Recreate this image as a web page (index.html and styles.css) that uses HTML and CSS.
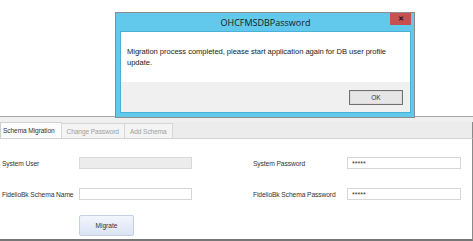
FILE: index.html
```html
<!DOCTYPE html>
<html lang="en">
<head>
  <meta charset="UTF-8">
  <title>OHCFMSDBPassword</title>
  <link rel="stylesheet" href="styles.css">
</head>
<body>
  <div class="top-area"></div>

  <div class="frame">
    <div class="tab-strip">
      <div class="tab active">Schema Migration</div>
      <div class="tab">Change Password</div>
      <div class="tab">Add Schema</div>
    </div>

    <div class="panel">
      <div class="form">
        <label>System User</label>
        <input class="field disabled" type="text" disabled>
        <span></span>
        <label>System Password</label>
        <input class="field" type="text" value="*****">

        <label>FidelioBk Schema Name</label>
        <input class="field" type="text">
        <span></span>
        <label>FidelioBk Schema Password</label>
        <input class="field" type="text" value="*****">
      </div>
      <button class="migrate-btn">Migrate</button>
    </div>
  </div>

  <div class="dialog">
    <div class="dialog-title">
      <span>OHCFMSDBPassword</span>
      <div class="close-btn">&#x2715;</div>
    </div>
    <div class="dialog-body">
      <div class="dialog-message">Migration process completed, please start application again for DB user profile update.</div>
      <div class="dialog-footer">
        <button class="ok-btn">OK</button>
      </div>
    </div>
  </div>
</body>
</html>
```

FILE: styles.css
```css
body {
  margin: 0;
  width: 473px;
  height: 241px;
  overflow: hidden;
  background-color: #ffffff;
  font-family: "Liberation Sans", Arial, sans-serif;
  position: relative;
}
.top-area {
  height: 116px;
}
.frame {
  border-top: 1px solid #a8a8a8;
  background-color: #f0f0f0;
  padding-top: 5px;
}
.tab-strip {
  display: flex;
  height: 16px;
  border-bottom: 1px solid #d2d2d2;
  border-right: 1px solid #8a8a8a;
  background-color: #ececec;
}
.tab {
  font-size: 6.6px;
  letter-spacing: -0.1px;
  color: #a0a0a0;
  padding: 0 5px;
  line-height: 15px;
  border: 1px solid #d8d8d8;
  border-bottom: none;
  background-color: #f4f4f4;
  margin-top: 1px;
  white-space: nowrap;
}
.tab + .tab {
  margin-left: -1px;
}
.tab.active {
  color: #333;
  background-color: #fcfcfc;
  border-color: #d0d0d0;
  padding: 0 6px 0 2px;
  margin-top: 0;
  line-height: 16px;
}
.panel {
  background-color: #ffffff;
  height: 100px;
  border-right: 1px solid #8a8a8a;
  border-bottom: 2px solid #777;
}
.form {
  display: grid;
  grid-template-columns: 77px 113px 61px 94px 114px;
  grid-auto-rows: 14px;
  row-gap: 17px;
  align-items: center;
  padding: 17px 0 0 2px;
}
.form label {
  font-size: 6.7px;
  letter-spacing: -0.1px;
  color: #333;
  white-space: nowrap;
}
.field {
  box-sizing: border-box;
  height: 12px;
  margin: 0;
  padding: 0 4px;
  border: 1px solid #d6d6d6;
  background-color: #ffffff;
  font-family: "Liberation Sans", Arial, sans-serif;
  font-size: 7px;
  color: #333;
  outline: none;
}
.field.disabled {
  background-color: #ececec;
  border-color: #d9d9d9;
}
.migrate-btn {
  display: block;
  margin: 14px 0 0 79px;
  width: 55px;
  height: 21px;
  border: 1px solid #c4cfe0;
  border-radius: 2px;
  background: linear-gradient(#f1f5fc, #dbe4f4);
  font-family: "Liberation Sans", Arial, sans-serif;
  font-size: 6.6px;
  color: #333;
}
.dialog {
  position: absolute;
  left: 115px;
  top: 12px;
  width: 300px;
  height: 106px;
  box-sizing: border-box;
  border: 1px solid #8c8c8c;
  background-color: #62c9ec;
  padding: 0 3px 4px 4px;
  display: flex;
  flex-direction: column;
}
.dialog-title {
  height: 18px;
  display: flex;
  align-items: center;
  justify-content: center;
  position: relative;
  font-family: "Open Sans", "Liberation Sans", sans-serif;
  font-size: 9px;
  color: #1a1a1a;
}
.close-btn {
  position: absolute;
  right: 0;
  top: 0;
  width: 21px;
  height: 12px;
  background-color: #c75050;
  color: #1a1a1a;
  font-size: 7px;
  font-weight: bold;
  line-height: 12px;
  text-align: center;
}
.dialog-body {
  flex: 1;
  display: flex;
  flex-direction: column;
  background-color: #ffffff;
  border: 1px solid #4bb0d8;
}
.dialog-message {
  flex: 1;
  padding: 14px 8px 0 6px;
  font-size: 7.6px;
  letter-spacing: -0.05px;
  line-height: 11px;
  color: #1a1a1a;
}
.dialog-footer {
  height: 30px;
  background-color: #f0f0f0;
  display: flex;
  align-items: center;
  justify-content: flex-end;
  padding-right: 7px;
}
.ok-btn {
  width: 54px;
  height: 15px;
  border: 1px solid #707070;
  box-shadow: inset 0 0 0 1px #dcdcdc;
  background-color: #e6e6e6;
  font-family: "Liberation Sans", Arial, sans-serif;
  font-size: 6.6px;
  color: #333;
  padding: 0;
}
```
